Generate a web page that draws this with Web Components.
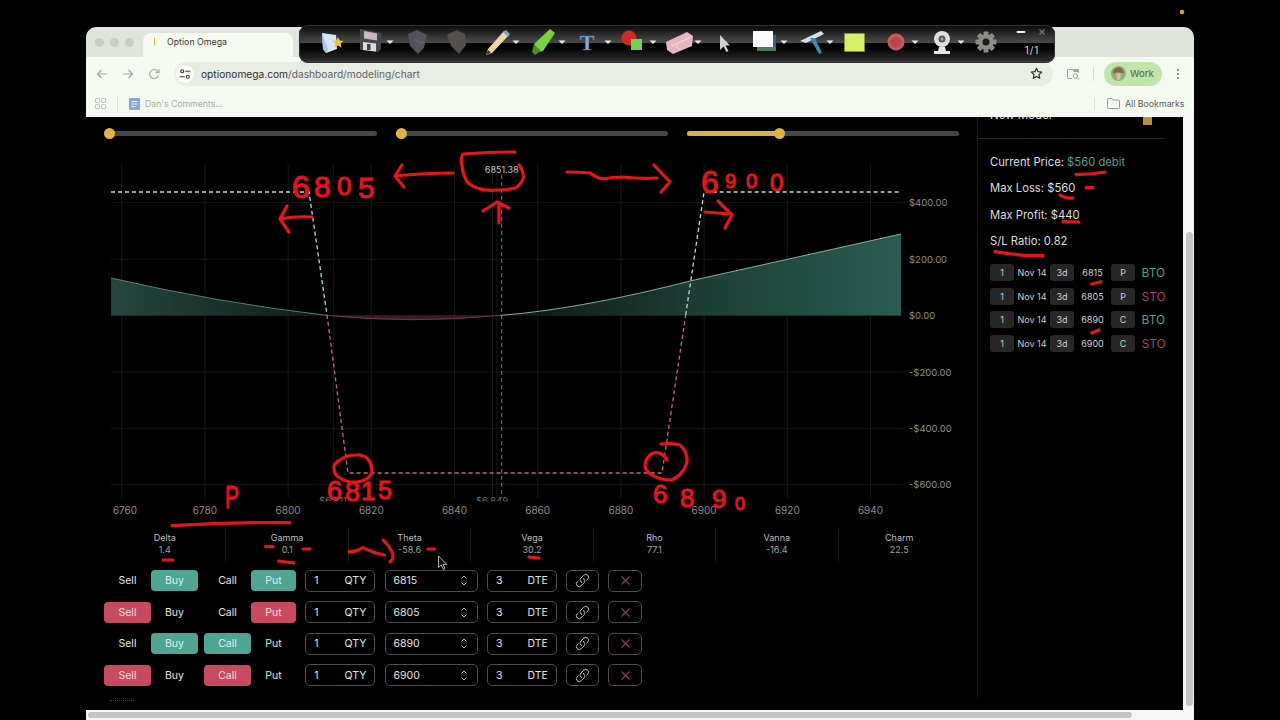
<!DOCTYPE html>
<html lang="en">

<head>
    <meta charset="UTF-8">
    <title>Option Omega</title>
    <style>
        html, body { margin: 0; background: #000; }
        body { width: 1280px; height: 720px; overflow: hidden; padding: 27px 0 0 86px; box-sizing: border-box; font-family: Inter, "Liberation Sans", sans-serif; }
    </style>
</head>

<body>
    <browser-window>
        <model-page>
            <range-slider slot="controls" fill="4"></range-slider>
            <range-slider slot="controls" fill="6"></range-slider>
            <range-slider slot="controls" fill="93"></range-slider>

            <strategy-chart slot="chart"></strategy-chart>

            <greek-stat slot="greeks" first label="Delta" value="1.4"></greek-stat>
            <greek-stat slot="greeks" label="Gamma" value="0.1"></greek-stat>
            <greek-stat slot="greeks" label="Theta" value="-58.6"></greek-stat>
            <greek-stat slot="greeks" label="Vega" value="30.2"></greek-stat>
            <greek-stat slot="greeks" label="Rho" value="77.1"></greek-stat>
            <greek-stat slot="greeks" label="Vanna" value="-16.4"></greek-stat>
            <greek-stat slot="greeks" label="Charm" value="22.5"></greek-stat>

            <leg-row slot="legs" side="buy" right="put" strike="6815"></leg-row>
            <leg-row slot="legs" side="sell" right="put" strike="6805"></leg-row>
            <leg-row slot="legs" side="buy" right="call" strike="6890"></leg-row>
            <leg-row slot="legs" side="sell" right="call" strike="6900"></leg-row>

            <summary-line slot="summary" label="Current Price:" value="$560 debit" tone="teal"></summary-line>
            <summary-line slot="summary" label="Max Loss:" value="$560"></summary-line>
            <summary-line slot="summary" label="Max Profit:" value="$440"></summary-line>
            <summary-line slot="summary" label="S/L Ratio:" value="0.82"></summary-line>

            <leg-summary slot="positions" strike="6815" right="P" action="BTO"></leg-summary>
            <leg-summary slot="positions" strike="6805" right="P" action="STO"></leg-summary>
            <leg-summary slot="positions" strike="6890" right="C" action="BTO"></leg-summary>
            <leg-summary slot="positions" strike="6900" right="C" action="STO"></leg-summary>
        </model-page>
    </browser-window>

    <ink-toolbar></ink-toolbar>
    <pen-marks></pen-marks>

    <script>
        // Browser frame: ............................................................... //

        class BrowserWindow extends HTMLElement {
            constructor() {
                super();
                const shadow = this.attachShadow({ mode: 'open' });
                shadow.innerHTML = `
                    <style>
                        :host { display: flex; flex-direction: column; width: 1108px; height: 693px; color: #333; }
                        svg { display: block; flex: none; }
                        .tabs { height: 30px; background: #dfe5dc; border-radius: 10px 10px 0 0; display: flex; align-items: flex-end; padding-left: 9px; }
                        .lights { display: flex; gap: 6px; align-self: center; margin-right: 9px; }
                        .lights i { width: 9px; height: 9px; border-radius: 50%; background: #c8cec5; }
                        .tab { width: 150px; height: 24px; background: #f5faf0; border-radius: 8px 8px 0 0; display: flex; align-items: center; font-size: 8.8px; color: #3a3a3a; padding: 0 0 7px 11px; box-sizing: border-box; }
                        .tab b { width: 3px; height: 7px; border-left: 1px solid #dcae46; margin-right: 9px; }
                        .bar { height: 33px; background: #f5faf0; display: flex; align-items: center; padding-left: 9px; }
                        .nav { display: flex; gap: 12px; margin-right: 13px; }
                        .pill { width: 879px; height: 24px; border-radius: 12px; background: #e8ede4; display: flex; align-items: center; padding: 0 10px 0 1px; box-sizing: border-box; }
                        .site { width: 18px; height: 18px; border-radius: 50%; background: #fbfdf9; display: flex; align-items: center; justify-content: center; margin: 0 7px 0 1px; }
                        .url { flex: 1; font-size: 10.2px; color: #5e625c; }
                        .url span { color: #2c2e2b; }
                        .sep { width: 1px; height: 14px; background: #d9ddd5; flex: none; }
                        .work { width: 58px; height: 24px; border-radius: 12px; background: #bfe5ab; display: flex; align-items: center; font-size: 9.5px; font-weight: 500; color: #5a7552; box-sizing: border-box; padding-left: 7px; gap: 4px; margin-left: 10px; }
                        .marks { height: 27px; background: #f5faf0; display: flex; align-items: center; padding-left: 9px; font-size: 8.7px; color: #a9ada6; }
                        .marks .all { color: #5c605a; margin-left: 5px; font-size: 8.8px; white-space: nowrap; }
                        .page { flex: 1; min-height: 0; display: grid; grid-template-columns: 1fr 11px; grid-template-rows: 1fr 10px; background: #f6f7f5; }
                        .view { min-height: 0; overflow: hidden; background: #000; }
                        .vbar { display: flex; flex-direction: column; padding: 115px 1.5px 4px 2.5px; }
                        .vbar i { flex: 1; background: #c3c5c2; border-radius: 4px; }
                        .hbar { grid-column: 1 / 3; padding: 1.5px 62px 2px 2px; }
                        .hbar i { display: block; height: 100%; background: #c3c5c2; border-radius: 4px; }
                    </style>
                    <div class="tabs">
                        <div class="lights"><i></i><i></i><i></i></div>
                        <div class="tab"><b></b>Option Omega</div>
                    </div>
                    <div class="bar">
                        <div class="nav">
                            <svg width="14" height="14" viewBox="0 0 14 14" fill="none" stroke="#a5aaa2" stroke-width="1.2"><path d="M12 7H2.5M6.5 3 2.5 7l4 4"/></svg>
                            <svg width="14" height="14" viewBox="0 0 14 14" fill="none" stroke="#a5aaa2" stroke-width="1.2"><path d="M2 7h9.5M7.5 3l4 4-4 4"/></svg>
                            <svg width="14" height="14" viewBox="0 0 14 14" fill="none" stroke="#a5aaa2" stroke-width="1.2"><path d="M11.3 8.5A4.5 4.5 0 1 1 10.6 4.2L11.8 5.5M12 2.2v3.5H8.6"/></svg>
                        </div>
                        <div class="pill">
                            <div class="site"><svg width="12" height="12" viewBox="0 0 12 12" fill="none" stroke="#3a3d39" stroke-width="1.1"><circle cx="3.2" cy="3.2" r="1.5"/><path d="M6.2 3.2h5M.8 8.8h5"/><circle cx="8.8" cy="8.8" r="1.5"/></svg></div>
                            <div class="url"><span>optionomega.com</span>/dashboard/modeling/chart</div>
                            <svg width="13" height="13" viewBox="0 0 24 24" fill="none" stroke="#2c2e2b" stroke-width="2.2" stroke-linejoin="round"><path d="M12 2.5l2.9 6.2 6.7.8-5 4.6 1.4 6.7-6-3.4-6 3.4 1.4-6.7-5-4.6 6.7-.8z"/></svg>
                        </div>
                        <svg style="margin:0 13px 0 13px" width="14" height="14" viewBox="0 0 14 14" fill="none" stroke="#a0a59d" stroke-width="1"><path d="M6 11.5H1.5v-9h11V6"/><rect x="7.5" y="2.5" width="5" height="2.5" fill="#a0a59d" stroke="none"/><circle cx="9.5" cy="9" r="2.2"/><path d="M11 10.6l2 2"/></svg>
                        <div class="sep"></div>
                        <div class="work">
                            <svg width="15" height="15" viewBox="0 0 15 15"><circle cx="7.5" cy="7.5" r="7.5" fill="#8fae78"/><path d="M2 7.5C2.5 3 5 1.5 7.5 1.5S12.5 3 13 7.5c-3-1.5-8-1.5-11 0z" fill="#7d6a4a"/><path d="M5.4 7.5h4.2l-.5 6H5.9z" fill="#d9c3a5"/></svg>
                            Work
                        </div>
                        <svg style="margin-left:12px" width="8" height="14" viewBox="0 0 8 14" fill="#777b74"><circle cx="4" cy="3" r="1.1"/><circle cx="4" cy="7" r="1.1"/><circle cx="4" cy="11" r="1.1"/></svg>
                    </div>
                    <div class="marks">
                        <svg width="11" height="11" viewBox="0 0 11 11" fill="none" stroke="#b6bab2" stroke-width=".9"><rect x=".5" y=".5" width="4" height="4" rx=".8"/><rect x="6.5" y=".5" width="4" height="4" rx=".8"/><rect x=".5" y="6.5" width="4" height="4" rx=".8"/><rect x="6.5" y="6.5" width="4" height="4" rx=".8"/></svg>
                        <div class="sep" style="margin:0 11px"></div>
                        <svg style="margin-right:5px" width="11" height="12" viewBox="0 0 11 12"><rect width="11" height="12" rx="1" fill="#8aa6dc"/><path d="M2.5 3.5h6M2.5 6h6M2.5 8.5h4" stroke="#f0f4fb" stroke-width="1"/></svg>
                        <span style="width:949px;flex:none">Dan's Comments...</span>
                        <div class="sep" style="margin-right:12px"></div>
                        <svg width="13" height="11" viewBox="0 0 13 11" fill="none" stroke="#8d918a" stroke-width=".9"><path d="M.5 1.5q0-1 1-1h3l1.5 1.5h5.5q1 0 1 1v6.5q0 1-1 1h-10q-1 0-1-1z"/></svg>
                        <span class="all">All Bookmarks</span>
                    </div>
                    <div class="page">
                        <div class="view"><slot></slot></div>
                        <div class="vbar"><i></i></div>
                        <div class="hbar"><i></i></div>
                    </div>
                `;
            }
        }

        customElements.define('browser-window', BrowserWindow);

        // Page layout: ............................................................... //

        class ModelPage extends HTMLElement {
            constructor() {
                super();
                const shadow = this.attachShadow({ mode: 'open' });
                shadow.innerHTML = `
                    <style>
                        :host { display: grid; grid-template-columns: 891px 206px; height: 100%; }
                        main { padding: 10.5px 18px 0 19px; min-width: 0; }
                        .controls { display: grid; grid-template-columns: repeat(3, 1fr); column-gap: 18.5px; }
                        .greeks { display: grid; grid-template-columns: repeat(7, 122.43px); margin: 3px 0 0 -2px; }
                        .legs { display: flex; flex-direction: column; gap: 9.6px; margin: 9px 0 0 -1px; }
                        .tail { width: 24px; border-top: 1px dotted #444; margin: 14px 0 0 5px; }
                        aside { border-left: 1px solid #1c1c1c; height: 581px; box-sizing: border-box; overflow: hidden; color: #ddd; }
                        .inner { margin-top: -12px; padding-left: 12px; }
                        header { height: 34px; margin-left: -12px; padding: 3px 13px 0 12px; display: flex; justify-content: space-between; border-bottom: 1px solid #262626; font-size: 11.5px; line-height: 15px; box-sizing: border-box; width: 187px; }
                        header i { width: 9px; height: 10px; margin-top: 7px; background: #bb9233; }
                        .summary { display: flex; flex-direction: column; gap: 10.4px; margin-top: 15px; }
                        .positions { display: flex; flex-direction: column; gap: 6.5px; margin-top: 15px; }
                    </style>
                    <main>
                        <div class="controls"><slot name="controls"></slot></div>
                        <slot name="chart"></slot>
                        <div class="greeks"><slot name="greeks"></slot></div>
                        <div class="legs"><slot name="legs"></slot></div>
                        <div class="tail"></div>
                    </main>
                    <aside>
                        <div class="inner">
                            <header>New Model<i></i></header>
                            <div class="summary"><slot name="summary"></slot></div>
                            <div class="positions"><slot name="positions"></slot></div>
                        </div>
                    </aside>
                `;
            }
        }

        customElements.define('model-page', ModelPage);

        class RangeSlider extends HTMLElement {
            connectedCallback() {
                const shadow = this.attachShadow({ mode: 'open' });
                const fill = this.getAttribute('fill');
                shadow.innerHTML = `
                    <style>
                        :host { display: block; height: 12px; position: relative; }
                        .track { position: absolute; left: 0; right: 0; top: 3.5px; height: 5px; border-radius: 3px; background: #464646; overflow: hidden; }
                        .fill { height: 100%; background: #dcae46; }
                        .thumb { position: absolute; top: .5px; width: 11px; height: 11px; margin-left: -5.5px; border-radius: 50%; background: #e2b343; }
                    </style>
                    <div class="track"><div class="fill" style="width:${fill}px"></div></div>
                    <div class="thumb" style="left:${fill}px"></div>
                `;
            }
        }

        customElements.define('range-slider', RangeSlider);

        // Payoff chart, user units are the page's pixels: ............................................................... //

        class StrategyChart extends HTMLElement {
            constructor() {
                super();
                const shadow = this.attachShadow({ mode: 'open' });
                const gridX = [6760, 6780, 6800, 6820, 6840, 6860, 6880, 6900, 6920, 6940].map(v => 121.7 + (v - 6760) * 4.16);
                const gridY = [201.7, 258.2, 314.4, 371, 427.3, 483.4];
                const moneyLabels = ['$400.00', '$200.00', '$0.00', '-$200.00', '-$400.00', '-$600.00'];
                const strikeLabels = ['6760', '6780', '6800', '6820', '6840', '6860', '6880', '6900', '6920', '6940'];
                shadow.innerHTML = `
                    <style>
                        :host { display: block; width: 854px; height: 379px; margin-top: 7px; }
                        svg { display: block; font-family: Inter, "Liberation Sans", sans-serif; }
                        .grid { stroke: #181818; stroke-width: 1; }
                        .money { fill: #8d8d8d; font-size: 9.5px; }
                        .tick { fill: #8d8d8d; font-size: 10px; text-anchor: middle; }
                        .flag { fill: #6e6e6e; font-size: 9.5px; text-anchor: middle; }
                    </style>
                    <svg width="854" height="379" viewBox="105 146 854 379">
                        <defs>
                            <linearGradient id="left" gradientUnits="userSpaceOnUse" x1="111" y1="0" x2="327" y2="0">
                                <stop offset="0" stop-color="#254640"/><stop offset="1" stop-color="#0e1c19"/>
                            </linearGradient>
                            <linearGradient id="right" gradientUnits="userSpaceOnUse" x1="500" y1="0" x2="901" y2="0">
                                <stop offset="0" stop-color="#0c1614"/><stop offset=".45" stop-color="#1b3a33"/><stop offset="1" stop-color="#2a5d52"/>
                            </linearGradient>
                            <clipPath id="cut"><rect x="300" y="490" width="230" height="10.5"/></clipPath>
                        </defs>
                        <g class="grid">
                            ${gridX.map(x => `<line x1="${x}" x2="${x}" y1="163" y2="497"/>`).join('')}
                            ${gridY.map(y => `<line x1="111" x2="903" y1="${y}" y2="${y}"/>`).join('')}
                            <line x1="333.3" x2="333.3" y1="163" y2="497"/>
                            <line x1="492.5" x2="492.5" y1="163" y2="497"/>
                            <line x1="496.8" x2="496.8" y1="163" y2="497"/>
                        </g>

                        <path d="M111 277Q220 302 327 314.4H111Z" fill="url(#left)"/>
                        <path d="M500 314.4C560 310 632 295 690 280L901 233V314.4Z" fill="url(#right)"/>
                        <path d="M111 277Q220 302 327 314.4" fill="none" stroke="#6f978c" stroke-width=".8"/>
                        <path d="M500 314.4C560 310 632 295 690 280L901 233" fill="none" stroke="#93bdb1" stroke-width=".9"/>
                        <path d="M327 314.4Q413 323 500 314.4Z" fill="#3b1a23"/>
                        <path d="M327 314.4Q413 323 500 314.4" fill="none" stroke="#7d3b4a" stroke-width=".9"/>

                        <path d="M111 191H309L327 314" fill="none" stroke="#a8e6d8" stroke-width="1.3" stroke-dasharray="4 3"/>
                        <path d="M327 314L348 472H662L685.7 314" fill="none" stroke="#c8667c" stroke-width="1.3" stroke-dasharray="4 3"/>
                        <path d="M685.7 314L704 191H901" fill="none" stroke="#a8e6d8" stroke-width="1.3" stroke-dasharray="4 3"/>
                        <line x1="501.7" x2="501.7" y1="174" y2="497" stroke="#777" stroke-width="1" stroke-dasharray="4 3"/>

                        <text x="501.7" y="172" fill="#c4c4c4" font-size="9" text-anchor="middle">6851.38</text>
                        <g clip-path="url(#cut)">
                            <text class="flag" x="333" y="503">$6,811</text>
                            <text class="flag" x="492" y="503">$6,849</text>
                        </g>
                        ${gridY.map((y, i) => `<text class="money" x="909" y="${y + 3.5}">${moneyLabels[i]}</text>`).join('')}
                        ${gridX.map((x, i) => `<text class="tick" x="${i ? x : 125}" y="513">${strikeLabels[i]}</text>`).join('')}
                    </svg>
                `;
            }
        }

        customElements.define('strategy-chart', StrategyChart);

        class GreekStat extends HTMLElement {
            connectedCallback() {
                const shadow = this.attachShadow({ mode: 'open' });
                shadow.innerHTML = `
                    <style>
                        :host { display: flex; flex-direction: column; align-items: center; height: 32px; padding-top: 3px; box-sizing: border-box; border-left: 1px solid #1f1f1f; font-size: 9px; line-height: 12px; }
                        :host([first]) { border-left: 0; padding-left: 1px; }
                        div { color: #bdbdbd; }
                        span { color: #a2a2a2; }
                    </style>
                    <div>${this.getAttribute('label')}</div>
                    <span>${this.getAttribute('value')}</span>
                `;
            }
        }

        customElements.define('greek-stat', GreekStat);

        // Order legs under the chart: ............................................................... //

        class LegRow extends HTMLElement {
            connectedCallback() {
                const shadow = this.attachShadow({ mode: 'open' });
                const side = this.getAttribute('side');
                const right = this.getAttribute('right');
                const tone = side === 'buy' ? 'teal' : 'red';
                shadow.innerHTML = `
                    <style>
                        :host { display: flex; align-items: center; height: 22px; gap: 9.3px; font-size: 10.5px; color: #e4e4e4; }
                        .pair { display: flex; }
                        .toggle { width: 47px; height: 21px; line-height: 21px; text-align: center; border-radius: 4px; }
                        .teal { background: #4fa594; color: #dff2ee; }
                        .red { background: #c84a5e; color: #f8dfe3; }
                        .box { box-sizing: border-box; height: 22px; border: 1px solid #4d4d4d; border-radius: 5px; display: flex; align-items: center; justify-content: space-between; padding: 0 8px; }
                        .num { width: 70px; }
                        .strike { width: 93px; }
                        .icon { width: 33px; justify-content: center; padding: 0; }
                        svg { display: block; }
                    </style>
                    <div class="pair">
                        <div class="toggle ${side === 'sell' ? tone : ''}">Sell</div>
                        <div class="toggle ${side === 'buy' ? tone : ''}">Buy</div>
                    </div>
                    <div class="pair" style="margin-left:-3.3px">
                        <div class="toggle ${right === 'call' ? tone : ''}">Call</div>
                        <div class="toggle ${right === 'put' ? tone : ''}" style="width:45px">Put</div>
                    </div>
                    <div class="box num"><span>1</span><span>QTY</span></div>
                    <div class="box strike"><span>${this.getAttribute('strike')}</span>
                        <svg width="10" height="13" viewBox="0 0 10 13" fill="none" stroke="#b5b5b5" stroke-width="1"><path d="M2.5 4.5 5 2l2.5 2.5M2.5 8.5 5 11l2.5-2.5"/></svg>
                    </div>
                    <div class="box num"><span>3</span><span>DTE</span></div>
                    <div class="box icon">
                        <svg width="15" height="15" viewBox="0 0 24 24" fill="none" stroke="#c6c6c6" stroke-width="1.5" stroke-linecap="round" stroke-linejoin="round"><path d="M13.19 8.688a4.5 4.5 0 0 1 1.242 7.244l-4.5 4.5a4.5 4.5 0 0 1-6.364-6.364l1.757-1.757m13.35-.622 1.757-1.757a4.5 4.5 0 0 0-6.364-6.364l-4.5 4.5a4.5 4.5 0 0 0 1.242 7.244"/></svg>
                    </div>
                    <div class="box icon" style="width:34px">
                        <svg width="11" height="11" viewBox="0 0 11 11" fill="none" stroke="#8a4150" stroke-width="1.1"><path d="M1.5 1.5l8 8M9.5 1.5l-8 8"/></svg>
                    </div>
                `;
            }
        }

        customElements.define('leg-row', LegRow);

        // Right hand summary: ............................................................... //

        class SummaryLine extends HTMLElement {
            connectedCallback() {
                const shadow = this.attachShadow({ mode: 'open' });
                const tone = this.getAttribute('tone');
                shadow.innerHTML = `
                    <style>
                        :host { display: block; font-size: 11.25px; line-height: 16px; color: #dedede; white-space: nowrap; }
                        .teal { color: #5b9d8c; }
                    </style>
                    ${this.getAttribute('label')} <span class="${tone || ''}">${this.getAttribute('value')}</span>
                `;
            }
        }

        customElements.define('summary-line', SummaryLine);

        class LegSummary extends HTMLElement {
            connectedCallback() {
                const shadow = this.attachShadow({ mode: 'open' });
                const action = this.getAttribute('action');
                shadow.innerHTML = `
                    <style>
                        :host { display: grid; grid-template-columns: 24px 36px 24px 37px 24px auto; align-items: center; height: 17px; font-size: 9px; color: #cfcfcf; text-align: center; }
                        .chip { height: 17px; line-height: 17px; border-radius: 3px; background: #272727; }
                        .act { font-size: 12px; margin-left: 6.5px; text-align: left; color: ${action === 'BTO' ? '#5b9d8c' : '#a8455a'}; }
                    </style>
                    <div class="chip">1</div>
                    <div>Nov 14</div>
                    <div class="chip">3d</div>
                    <div>${this.getAttribute('strike')}</div>
                    <div class="chip">${this.getAttribute('right')}</div>
                    <div class="act">${action}</div>
                `;
            }
        }

        customElements.define('leg-summary', LegSummary);

        // Screen annotation tool floating over the browser: ............................................................... //

        class InkToolbar extends HTMLElement {
            constructor() {
                super();
                const shadow = this.attachShadow({ mode: 'open' });
                const drops = [390, 516, 562, 608, 653, 698, 784, 830, 915, 961];
                const gearTeeth = [0, 45, 90, 135].map(a => `<rect x="983.5" y="31.5" width="5" height="21" rx="1" transform="rotate(${a} 986 42)"/>`).join('');
                shadow.innerHTML = `
                    <style>
                        :host { position: absolute; left: 299px; top: 25px; width: 756px; height: 38px; border-radius: 9px; overflow: hidden; background: linear-gradient(#0a0a0a 0, #1c1c1c 14%, #4a4a4a 46%, #000 49%, #050505 62%, #2c2c2c 94%, #555 100%); box-shadow: inset 0 0 0 1px #333; }
                        svg { display: block; }
                        .count { fill: #d4d4d4; font: 10px Inter, "Liberation Sans", sans-serif; text-anchor: middle; letter-spacing: 1px; }
                        .glyph { fill: #7fb2d6; stroke: #3f6f92; stroke-width: .5; font: 700 22px "Liberation Serif", serif; text-anchor: middle; }
                    </style>
                    <svg width="756" height="38" viewBox="299 25 756 38">
                        <!-- new page -->
                        <path d="M322 33l14 2 1 14-11 4-3-4z" fill="#d9e6f7"/><path d="M322 33l6 16-2 4-3-4z" fill="#a9c2ea"/>
                        <path d="M338 37l1.7 3.5 3.8.5-2.8 2.6.7 3.8-3.4-1.8-3.4 1.8.7-3.8-2.8-2.6 3.8-.5z" fill="#f2c53d"/>
                        <!-- save -->
                        <path d="M360 29l21 4v16l-3 3-18-2z" fill="#47474b"/><path d="M364 31l13 2.5v7l-13-2z" fill="#c9b3c9"/><path d="M363 42l13 1.5v8l-13-1.5z" fill="#dcdcdc"/><rect x="367" y="44" width="3.5" height="6" fill="#444"/>
                        <!-- undo, redo, greyed out -->
                        <path d="M408 34l9-4 10 5-3 13-6 6-8-8z" fill="#55525a"/><path d="M414 39l6 4 4-1" stroke="#6a5480" fill="none" stroke-width="2"/>
                        <path d="M447 35l10-5 8 4 1 11-7 9-8-8z" fill="#55504a"/>
                        <!-- pencil -->
                        <path d="M488 49l16-18 5 4-17 18-6 2z" fill="#efd6a5"/><path d="M503 32l3-2 4 4-2 3z" fill="#7ba6c9"/><path d="M486 55l2-5 3 2.5z" fill="#44372a"/>
                        <!-- marker -->
                        <path d="M534 44l16-15 5 4-12 18-5 1z" fill="#7fd13c"/><path d="M534 44l7 7-6 4-3-3z" fill="#4d8f25"/>
                        <!-- text tool -->
                        <text class="glyph" x="587" y="50">T</text>
                        <!-- shapes -->
                        <circle cx="629" cy="38" r="7.5" fill="#cf2a24"/><rect x="631" y="39" width="11" height="11" fill="#6ed44a"/>
                        <!-- eraser -->
                        <path d="M666 42l21-10 6 4-1 10-19 8-6-4z" fill="#e7b6bf"/><path d="M672 46l19-9M676 46l4 4" stroke="#f6dfe2" fill="none" stroke-width="1"/>
                        <!-- pointer -->
                        <path d="M720 35v15l3.5-3.5 3 5.5 2-1-3-5.5h4.5z" fill="#cfcfcf"/>
                        <!-- page colour -->
                        <rect x="761" y="35" width="15" height="16" fill="#3a5a8a"/><rect x="757" y="47" width="19" height="4" fill="#4f7a55"/><rect x="753" y="31" width="20" height="16" fill="#fcfcfc"/>
                        <!-- roller -->
                        <path d="M800 41l21-10 3 3-18 9z" fill="#d7e2e8"/><path d="M810 38l5 0 7 15-3 1z" fill="#3f87ad"/>
                        <!-- fill colour -->
                        <rect x="844.5" y="33.5" width="20" height="18" fill="#d8ef68" stroke="#8a9a3f" stroke-width=".8" stroke-dasharray="1.5 1"/>
                        <!-- record -->
                        <circle cx="896" cy="42" r="8.5" fill="#c9585a"/><circle cx="896" cy="42" r="5.5" fill="#b54547"/>
                        <!-- webcam -->
                        <circle cx="942" cy="39" r="8" fill="#dedede"/><circle cx="942" cy="39" r="3.5" fill="#55585a"/><circle cx="942" cy="39" r="1.5" fill="#9aa"/><path d="M939 47h6l1 4h4v3h-16v-3h4z" fill="#e6e6e6"/>
                        <!-- settings -->
                        <g fill="#8c8c88">${gearTeeth}</g><circle cx="986" cy="42" r="7.5" fill="#8c8c88"/><circle cx="986" cy="42" r="3.5" fill="#1a1a1a"/>
                        <!-- drop downs -->
                        ${drops.map(x => `<path d="M${x - 3.5} 40.5h7l-3.5 3.5z" fill="#e8e8e8"/>`).join('')}
                        <rect x="1016.5" y="31" width="9" height="2" rx="1" fill="#f2f2f2"/>
                        <path d="M1039.5 29.5l5 5M1044.5 29.5l-5 5" stroke="#777" stroke-width="1.2"/>
                        <text class="count" x="1032" y="54">1/1</text>
                    </svg>
                `;
            }
        }

        customElements.define('ink-toolbar', InkToolbar);

        // Red pen drawn on the screen recording, plus the mouse pointer: ............................................................... //

        class PenMarks extends HTMLElement {
            constructor() {
                super();
                const shadow = this.attachShadow({ mode: 'open' });
                const strokes = [
                    // arrows and rings on the chart
                    'M312 217Q295 216 280 219M287 206L280 219L289 232',
                    'M453 173Q425 173 395 176M402 165L395 176L404 187',
                    'M515 152Q490 152 463 154Q460 158 462 165Q463 176 468 183Q480 192 497 190Q512 190 517 187Q525 180 523 174Q522 168 519 165',
                    'M499 223V202M483 211L497 202L509 208',
                    'M567 172Q580 172 590 173Q597 178 603 179Q612 177 623 177Q640 179 657 178M654 165L670 182L661 192',
                    'M705 212L730 214M718 201L732 215L725 228',
                    'M357 455Q346 455 340 460Q333 464 334 468Q334 475 340 478Q348 483 357 482Q368 481 372 473Q372 463 367 458Q362 454 357 455',
                    'M661 444Q672 443 680 445Q688 452 687 462Q684 474 672 480Q660 480 652 475Q645 471 645 465Q646 457 653 453Q662 451 667 460',
                    'M172 525.7Q230 522 290 522.7',
                    // greeks
                    'M163 560H173', 'M265.7 546.7H273', 'M303 549H310', 'M278.6 561L294 563',
                    'M349 551.7Q356 552 363 547.7Q373 553 384.6 555', 'M383 540Q391 547 393 555Q393 560 390 561.7', 'M428 549H434.6', 'M529 557L539 558',
                    // summary
                    'M1076 174.3Q1090 175 1105 172', 'M1060 195Q1066 199 1073 198', 'M1086 187.7H1093', 'M1063 221.7L1079 222',
                    'M995 251.7Q1020 256 1043 255.7', 'M1091.7 284L1101 281.7', 'M1091.7 333L1099 330'
                ];
                const digits = [
                    ['6', 292, 198, 32], ['8', 314, 197, 30], ['0', 337, 195, 26], ['5', 358, 198, 30],
                    ['6', 701, 193, 32], ['9', 725, 188, 20], ['0', 746, 188, 20], ['0', 770, 191, 24],
                    ['6', 327, 500, 27], ['8', 345, 501, 27], ['1', 361, 500, 26], ['5', 378, 499, 25],
                    ['6', 653, 503, 26], ['8', 680, 507, 26], ['9', 712, 508, 26], ['0', 735, 510, 18]
                ];
                shadow.innerHTML = `
                    <style>
                        :host { position: absolute; left: 0; top: 0; width: 1280px; height: 720px; pointer-events: none; }
                        svg { display: block; }
                        path.pen { fill: none; stroke: #e81419; stroke-width: 3.2; stroke-linecap: round; stroke-linejoin: round; }
                        text { fill: #e81419; stroke: #e81419; stroke-width: 1; stroke-linejoin: round; font-family: "Liberation Sans", sans-serif; }
                    </style>
                    <svg width="1280" height="720" viewBox="0 0 1280 720">
                        ${strokes.map(d => `<path class="pen" d="${d}"/>`).join('')}
                        ${digits.map(([c, x, y, s]) => `<text x="${x}" y="${y}" font-size="${s}">${c}</text>`).join('')}
                        <text x="225" y="508" font-size="32" textLength="14" lengthAdjust="spacingAndGlyphs">P</text>
                        <path d="M438.5 556v11.5l2.8-2.5 2 4.5 1.7-.8-2-4.3h3.8z" fill="#111" stroke="#ddd" stroke-width=".8"/>
                        <circle cx="1182" cy="12" r="2.3" fill="#c9a23a"/>
                    </svg>
                `;
            }
        }

        customElements.define('pen-marks', PenMarks);
    </script>
</body>

</html>
